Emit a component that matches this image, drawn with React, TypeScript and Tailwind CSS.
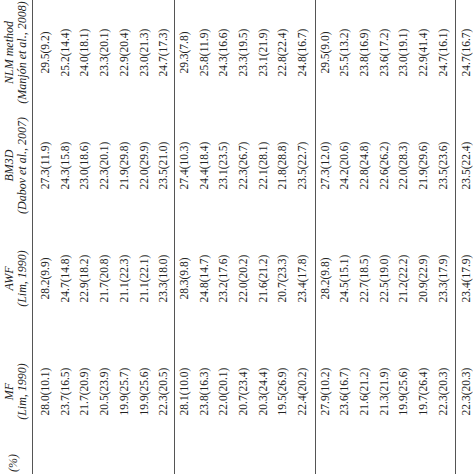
const headers = [
  ["MF", "(Lim, 1990)"],
  ["AWF", "(Lim, 1990)"],
  ["BM3D", "(Dabov et al., 2007)"],
  ["NLM method", "(Manjón et al., 2008)"],
];

const groups: string[][][] = [
  [
    ["28.0(10.1)", "28.2(9.9)", "27.3(11.9)", "29.5(9.2)"],
    ["23.7(16.5)", "24.7(14.8)", "24.3(15.8)", "25.2(14.4)"],
    ["21.7(20.9)", "22.9(18.2)", "23.0(18.6)", "24.0(18.1)"],
    ["20.5(23.9)", "21.7(20.8)", "22.3(20.1)", "23.3(20.1)"],
    ["19.9(25.7)", "21.1(22.3)", "21.9(29.8)", "22.9(20.4)"],
    ["19.9(25.6)", "21.1(22.1)", "22.0(29.9)", "23.0(21.3)"],
    ["22.3(20.5)", "23.3(18.0)", "23.5(21.0)", "24.7(17.3)"],
  ],
  [
    ["28.1(10.0)", "28.3(9.8)", "27.4(10.3)", "29.3(7.8)"],
    ["23.8(16.3)", "24.8(14.7)", "24.4(18.4)", "25.8(11.9)"],
    ["22.0(20.1)", "23.2(17.6)", "23.1(23.5)", "24.3(16.6)"],
    ["20.7(23.4)", "22.0(20.2)", "22.3(26.7)", "23.3(19.5)"],
    ["20.3(24.4)", "21.6(21.2)", "22.1(28.1)", "23.1(21.9)"],
    ["19.5(26.9)", "20.7(23.3)", "21.8(28.8)", "22.8(22.4)"],
    ["22.4(20.2)", "23.4(17.8)", "23.5(22.7)", "24.8(16.7)"],
  ],
  [
    ["27.9(10.2)", "28.2(9.8)", "27.3(12.0)", "29.5(9.0)"],
    ["23.6(16.7)", "24.5(15.1)", "24.2(20.6)", "25.5(13.2)"],
    ["21.6(21.2)", "22.7(18.5)", "22.8(24.8)", "23.8(16.9)"],
    ["21.3(21.9)", "22.5(19.0)", "22.6(26.2)", "23.6(17.2)"],
    ["19.9(25.6)", "21.2(22.2)", "22.0(28.3)", "23.0(19.1)"],
    ["19.7(26.4)", "20.9(22.9)", "21.9(29.6)", "22.9(41.4)"],
    ["22.3(20.3)", "23.3(17.9)", "23.5(23.6)", "24.7(16.1)"],
  ],
];

const overall = ["22.3(20.3)", "23.4(17.9)", "23.5(22.4)", "24.7(16.7)"];

function Row({ cells }: { cells: string[] }) {
  return (
    <div className="flex h-[19.7px] items-center">
      <div className="w-[120px]" />
      {cells.map((c, i) => (
        <div key={i} className="w-[113px] text-center">
          {c}
        </div>
      ))}
    </div>
  );
}

export default function App() {
  return (
    <div className="w-[474px] h-[474px] overflow-hidden bg-white">
      {/* the table is printed sideways, so it is laid out upright and turned */}
      <div
        className="w-[572px] origin-top-left -rotate-90 translate-y-[568px] text-[11.5px] leading-none text-[#222]"
        style={{ fontFamily: '"Liberation Serif", "Times New Roman", serif' }}
      >
        <div className="flex h-[33px] border-b border-[#555] italic text-[12px] leading-[13px]">
          <div className="w-[120px] flex items-center justify-end pr-[6px] pb-[5px] whitespace-nowrap">
            Noise (%)
          </div>
          {headers.map(([a, b]) => (
            <div key={a} className="w-[113px] flex flex-col items-center justify-center whitespace-nowrap">
              <span>{a}</span>
              <span>{b}</span>
            </div>
          ))}
        </div>

        {groups.map((rows, g) => (
          <div
            key={g}
            className={
              g === 0 ? "pt-[3px] border-b border-[#555]" : "pb-[2px] border-b border-[#555]"
            }
          >
            {rows.map((r, i) => (
              <Row key={i} cells={r} />
            ))}
          </div>
        ))}

        <Row cells={overall} />
      </div>
    </div>
  );
}
